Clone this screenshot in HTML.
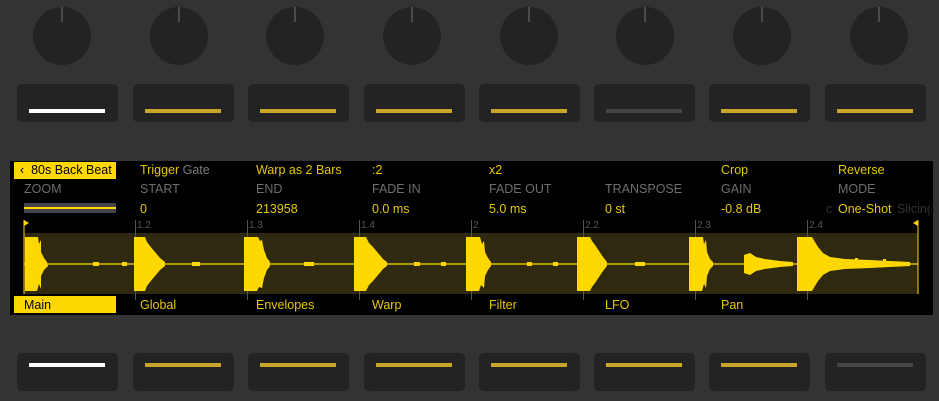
<!DOCTYPE html>
<html><head><meta charset="utf-8"><style>
*{margin:0;padding:0;box-sizing:border-box}
body{width:939px;height:401px;background:#333;position:relative;overflow:hidden;font-family:"Liberation Sans",sans-serif}
.knob{position:absolute;top:7px;width:58px;height:58px;border-radius:50%;background:#232323}
.knob i{position:absolute;left:28px;top:0;width:2px;height:15px;background:#4a4a4a}
.btn{position:absolute;width:101px;height:38px;border-radius:5px;background:#232323}
.btn i{position:absolute;left:12px;width:76px;height:4px}
.disp{position:absolute;left:10px;top:161px;width:923px;height:154px;background:#000}
.t{position:absolute;font-size:12.5px;line-height:15px;white-space:nowrap}
.y{color:#e6c800}.g{color:#6e6e6e}.d{color:#7a7a7a}
</style></head><body>
<div class="knob" style="left:33px"><i></i></div>
<div class="knob" style="left:150px"><i></i></div>
<div class="knob" style="left:266px"><i></i></div>
<div class="knob" style="left:383px"><i></i></div>
<div class="knob" style="left:500px"><i></i></div>
<div class="knob" style="left:616px"><i></i></div>
<div class="knob" style="left:733px"><i></i></div>
<div class="knob" style="left:850px"><i></i></div>

<div class="btn" style="left:17px;top:84px"><i style="top:25px;background:#fff"></i></div>
<div class="btn" style="left:133px;top:84px"><i style="top:25px;background:#c9a52a"></i></div>
<div class="btn" style="left:248px;top:84px"><i style="top:25px;background:#c9a52a"></i></div>
<div class="btn" style="left:364px;top:84px"><i style="top:25px;background:#c9a52a"></i></div>
<div class="btn" style="left:479px;top:84px"><i style="top:25px;background:#c9a52a"></i></div>
<div class="btn" style="left:594px;top:84px"><i style="top:25px;background:#454545"></i></div>
<div class="btn" style="left:709px;top:84px"><i style="top:25px;background:#c9a52a"></i></div>
<div class="btn" style="left:825px;top:84px"><i style="top:25px;background:#c9a52a"></i></div>

<div class="btn" style="left:17px;top:353px"><i style="top:10px;background:#fff"></i></div>
<div class="btn" style="left:133px;top:353px"><i style="top:10px;background:#c9a52a"></i></div>
<div class="btn" style="left:248px;top:353px"><i style="top:10px;background:#c9a52a"></i></div>
<div class="btn" style="left:364px;top:353px"><i style="top:10px;background:#c9a52a"></i></div>
<div class="btn" style="left:479px;top:353px"><i style="top:10px;background:#c9a52a"></i></div>
<div class="btn" style="left:594px;top:353px"><i style="top:10px;background:#c9a52a"></i></div>
<div class="btn" style="left:709px;top:353px"><i style="top:10px;background:#c9a52a"></i></div>
<div class="btn" style="left:825px;top:353px"><i style="top:10px;background:#454545"></i></div>

<div class="disp"></div>
<div style="position:absolute;left:14px;top:162px;width:102px;height:17px;background:#ffd800;overflow:hidden"><span class="t" style="left:6px;top:1px;color:#000">&#8249;&nbsp; 80s Back Beat</span></div>
<span class="t y" style="left:140px;top:163px">Trigger <span class="d">Gate</span></span>
<span class="t y" style="left:256px;top:163px">Warp as 2 Bars</span>
<span class="t y" style="left:372px;top:163px">:2</span>
<span class="t y" style="left:489px;top:163px">x2</span>
<span class="t y" style="left:721px;top:163px">Crop</span>
<span class="t y" style="left:838px;top:163px">Reverse</span>

<span class="t g" style="left:24px;top:182px">ZOOM</span>
<span class="t g" style="left:140px;top:182px">START</span>
<span class="t g" style="left:256px;top:182px">END</span>
<span class="t g" style="left:372px;top:182px">FADE IN</span>
<span class="t g" style="left:489px;top:182px">FADE OUT</span>
<span class="t g" style="left:605px;top:182px">TRANSPOSE</span>
<span class="t g" style="left:721px;top:182px">GAIN</span>
<span class="t g" style="left:838px;top:182px">MODE</span>

<div style="position:absolute;left:24px;top:203px;width:92px;height:10px;background:#444"></div>
<div style="position:absolute;left:24px;top:207px;width:92px;height:2px;background:#ffd800"></div>
<span class="t y" style="left:140px;top:202px">0</span>
<span class="t y" style="left:256px;top:202px">213958</span>
<span class="t y" style="left:372px;top:202px">0.0 ms</span>
<span class="t y" style="left:489px;top:202px">5.0 ms</span>
<span class="t y" style="left:605px;top:202px">0 st</span>
<span class="t y" style="left:721px;top:202px">-0.8 dB</span>
<div style="position:absolute;left:826px;top:202px;width:104px;height:16px;overflow:hidden"><span class="t" style="left:0;top:0;color:#333">c</span><span class="t y" style="left:12px;top:0">One-Shot</span><span class="t" style="left:71px;top:0;color:#333">Slicing</span></div>

<svg style="position:absolute;left:0;top:0" width="939" height="401">
<rect x="24" y="233" width="894" height="61" fill="#2f2a0f"/>
<g stroke="#555" stroke-width="1">
<line x1="135.5" y1="220" x2="135.5" y2="300"/><line x1="247.5" y1="220" x2="247.5" y2="300"/>
<line x1="359.5" y1="220" x2="359.5" y2="300"/><line x1="471.5" y1="220" x2="471.5" y2="300"/>
<line x1="583.5" y1="220" x2="583.5" y2="300"/><line x1="695.5" y1="220" x2="695.5" y2="300"/>
<line x1="807.5" y1="220" x2="807.5" y2="300"/></g>
<g font-family="Liberation Sans" font-size="10" fill="#555">
<text x="137" y="228">1.2</text><text x="249" y="228">1.3</text><text x="361" y="228">1.4</text>
<text x="473" y="228">2</text><text x="585" y="228">2.2</text><text x="697" y="228">2.3</text><text x="809" y="228">2.4</text></g>
<line x1="24" y1="220" x2="24" y2="294" stroke="#ffd800"/>
<polygon points="24,220 29,223 24,226" fill="#ffd800"/>
<line x1="918" y1="220" x2="918" y2="294" stroke="#ffd800"/>
<polygon points="918,220 913,223 918,226" fill="#ffd800"/>
<line x1="24" y1="264" x2="918" y2="264" stroke="#ffd800" stroke-width="1.2"/>
<g fill="#ffd800">
<polygon points="25,237 38,237 39,244 41,240 41,252 44,258 47,262 48,266 44,270 41,276 41,289 39,284 37,291 25,291"/>
<polygon points="134,237 145,237 147,242 150,246 155,252 160,258 165,262 165,266 160,270 155,276 150,282 147,286 145,291 134,291"/>
<polygon points="244,237 258,237 260,241 262,240 264,250 267,258 270,262 270,266 267,270 264,278 262,288 259,287 257,291 244,291"/>
<polygon points="354,237 366,237 369,243 373,247 378,253 383,259 387,262 387,266 383,269 378,275 373,281 369,285 366,291 354,291"/>
<polygon points="466,237 480,237 482,244 484,241 485,252 488,258 491,262 491,266 488,270 485,276 484,288 481,285 479,291 466,291"/>
<polygon points="577,237 590,237 592,241 595,245 599,251 603,257 607,262 607,266 603,271 599,277 595,283 592,287 590,291 577,291"/>
<polygon points="689,237 703,237 704,244 706,240 707,252 710,259 713,262 713,266 710,269 707,276 706,288 704,284 702,291 689,291"/>
<polygon points="744,255 750,253 756,257 765,259 780,261 793,262 793,266 780,267 765,269 756,271 750,275 744,273"/>
<polygon points="797,237 812,237 815,242 818,247 823,253 830,257 845,259 870,260 890,261 910,262 910,266 890,267 870,268 845,269 830,271 823,275 818,281 815,286 812,291 797,291"/>
<rect x="93" y="262" width="6" height="4"/><rect x="122" y="262" width="5" height="4"/>
<rect x="192" y="262" width="8" height="4"/><rect x="304" y="262" width="10" height="4"/>
<rect x="414" y="262" width="6" height="4"/><rect x="441" y="262" width="5" height="4"/>
<rect x="527" y="262" width="5" height="4"/><rect x="553" y="262" width="5" height="4"/>
<rect x="635" y="262" width="10" height="4"/>
<rect x="855" y="258" width="3" height="8"/><rect x="883" y="259" width="3" height="7"/>
</g></svg>

<div style="position:absolute;left:14px;top:296px;width:102px;height:17px;background:#ffd800"></div>
<span class="t" style="left:24px;top:298px;color:#000">Main</span>
<span class="t y" style="left:140px;top:298px">Global</span>
<span class="t y" style="left:256px;top:298px">Envelopes</span>
<span class="t y" style="left:372px;top:298px">Warp</span>
<span class="t y" style="left:489px;top:298px">Filter</span>
<span class="t y" style="left:605px;top:298px">LFO</span>
<span class="t y" style="left:721px;top:298px">Pan</span>
</body></html>
